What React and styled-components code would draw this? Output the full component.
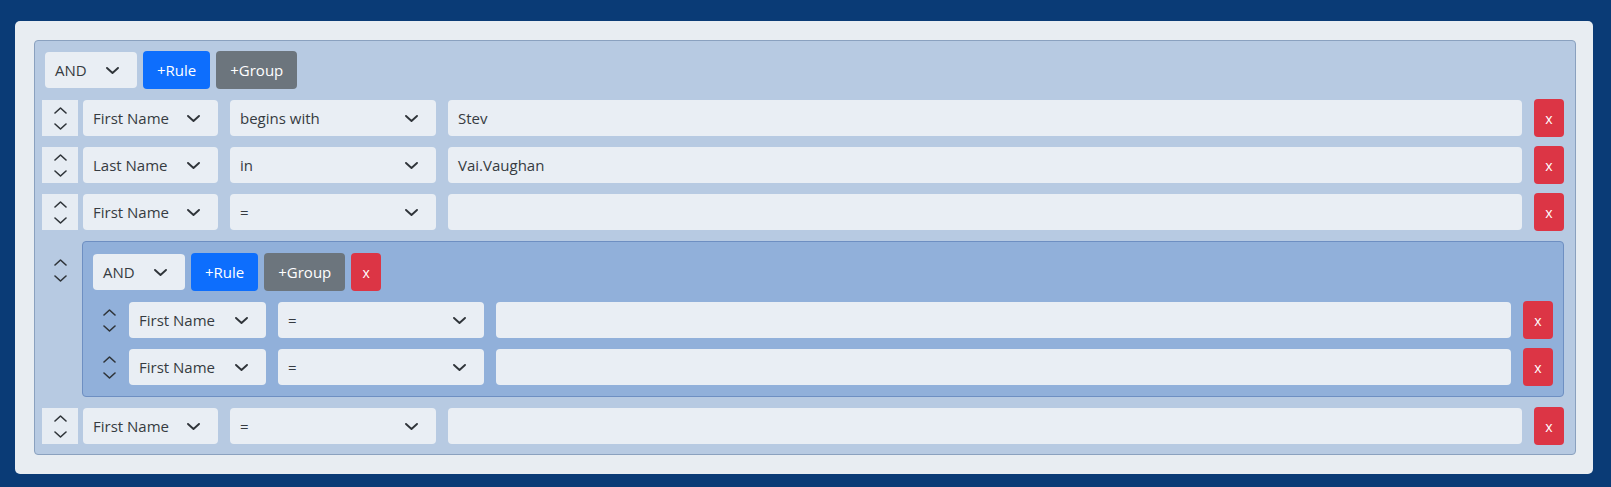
import React from "react";
import styled, { createGlobalStyle } from "styled-components";

const GlobalStyle = createGlobalStyle`
  html, body {
    margin: 0;
    padding: 0;
    background: #0a3b76;
  }
  body {
    font-family: "Open Sans", "Noto Sans", Arial, sans-serif;
    color: #363b41;
  }
`;

const query = {
  combinator: "AND",
  rules: [
    { field: "First Name", operator: "begins with", value: "Stev" },
    { field: "Last Name", operator: "in", value: "Vai.Vaughan" },
    { field: "First Name", operator: "=", value: "" },
    {
      combinator: "AND",
      rules: [
        { field: "First Name", operator: "=", value: "" },
        { field: "First Name", operator: "=", value: "" },
      ],
    },
    { field: "First Name", operator: "=", value: "" },
  ],
};

function Chevron({ up, thin }) {
  return (
    <svg width="13" height="7" viewBox="0 0 13 7" fill="none">
      <path
        d={up ? "M1 6 6.5 1 12 6" : "M1 1 6.5 6 12 1"}
        stroke="#2f3439"
        strokeWidth={thin ? 1.6 : 1.9}
        strokeLinecap="round"
        strokeLinejoin="round"
      />
    </svg>
  );
}

function Spinner({ boxed, nested }) {
  return (
    <Mover $boxed={boxed} $nested={nested}>
      <Chevron up thin />
      <Chevron thin />
    </Mover>
  );
}

function Select({ label, width }) {
  return (
    <Picker $width={width}>
      <span>{label}</span>
      <Chevron />
    </Picker>
  );
}

function Rule({ rule, nested }) {
  return (
    <Row>
      <Spinner boxed={!nested} nested={nested} />
      <Select label={rule.field} width={nested ? 137 : 135} />
      <Select label={rule.operator} width={206} />
      <Value>{rule.value}</Value>
      <Button $kind="remove">x</Button>
    </Row>
  );
}

function Group({ group, nested }) {
  return (
    <Box $nested={nested}>
      <Header $nested={nested}>
        <Select label={group.combinator} width={92} />
        <Button $kind="rule">+Rule</Button>
        <Button $kind="group">+Group</Button>
        {nested && <Button $kind="remove">x</Button>}
      </Header>
      {group.rules.map((r, i) =>
        r.rules ? (
          <GroupRow key={i}>
            <Spinner />
            <Group group={r} nested />
          </GroupRow>
        ) : (
          <Rule key={i} rule={r} nested={nested} />
        )
      )}
    </Box>
  );
}

export default function App() {
  return (
    <>
      <GlobalStyle />
      <Page>
        <Card>
          <Group group={query} />
        </Card>
      </Page>
    </>
  );
}

const Page = styled.div`
  padding: 21px 18px 14px 15px;
`;

const Card = styled.div`
  background: #e8edf2;
  border-radius: 5px;
  padding: 19px 17px 19px 19px;
`;

const Box = styled.div`
  flex: 1;
  display: flex;
  flex-direction: column;
  gap: 11px;
  border: 1px solid ${(p) => (p.$nested ? "#6e8fc2" : "#8aa1bf")};
  border-radius: 4px;
  background: ${(p) => (p.$nested ? "#91b0da" : "#b7cae2")};
  padding: ${(p) => (p.$nested ? "11px 10px 11px 8px" : "10px 11px 10px 7px")};
`;

const Header = styled.div`
  display: flex;
  align-items: center;
  gap: 6px;
  height: 38px;
  margin-left: ${(p) => (p.$nested ? "2px" : "3px")};
`;

const Row = styled.div`
  display: flex;
  align-items: center;
  height: 36px;
  gap: 12px;
`;

const GroupRow = styled.div`
  display: flex;
  align-items: flex-start;
  gap: 4px;
`;

const Mover = styled.div`
  width: 36px;
  height: 36px;
  flex: none;
  margin-right: ${(p) => (p.$nested ? "-10px" : "-7px")};
  display: flex;
  flex-direction: column;
  align-items: center;
  justify-content: center;
  gap: 9px;
  background: ${(p) => (p.$boxed ? "#e6ecf3" : "transparent")};
  ${GroupRow} > & {
    margin-right: 0;
    margin-top: 11px;
  }
`;

const Picker = styled.div`
  width: ${(p) => p.$width}px;
  height: 36px;
  flex: none;
  box-sizing: border-box;
  display: flex;
  align-items: center;
  justify-content: space-between;
  padding: 0 18px 0 10px;
  background: #e9eef4;
  border-radius: 4px;
  font-size: 15px;
  white-space: nowrap;
`;

const Value = styled.div`
  flex: 1;
  height: 36px;
  box-sizing: border-box;
  display: flex;
  align-items: center;
  padding: 0 10px;
  background: #e9eef4;
  border-radius: 4px;
  font-size: 15px;
`;

const colors = {
  rule: "#0d6efd",
  group: "#6c757d",
  remove: "#dc3545",
};

const Button = styled.button`
  height: 38px;
  flex: none;
  border: none;
  border-radius: 4px;
  background: ${(p) => colors[p.$kind]};
  color: #fff;
  font-family: inherit;
  font-size: ${(p) => (p.$kind === "remove" ? "14px" : "15px")};
  padding: 0 14px;
  ${(p) => p.$kind === "remove" && "width: 30px; padding: 0;"}
`;
